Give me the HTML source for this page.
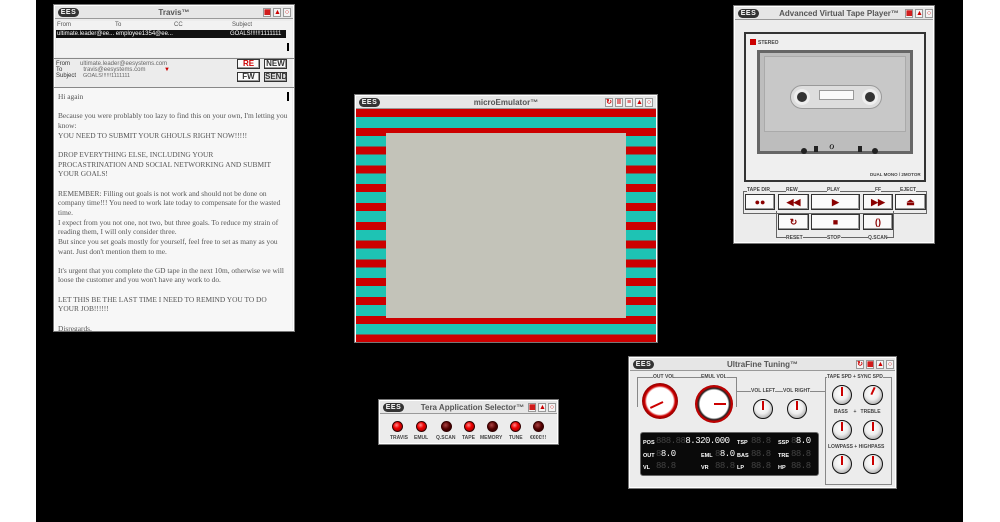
<!DOCTYPE html>
<html><head><meta charset="utf-8"><style>
*{margin:0;padding:0;box-sizing:border-box}
body{width:1000px;height:522px;background:#fff;position:relative;overflow:hidden;font-family:"Liberation Sans",sans-serif}
.bk{position:absolute;left:36px;top:0;width:927px;height:522px;background:#000}
.a{position:absolute}
.win{position:absolute;background:#ececec;border:1px solid #777;box-shadow:inset 0 0 0 1px #fff}
.tb{position:absolute;left:1px;right:1px;top:1px;height:13px;background:#e6e6e6;border-bottom:1px solid #999}
.logo{position:absolute;left:3px;top:2px;width:21px;height:9px;border-radius:5px;background:#333;color:#fff;font:bold 7px/9px "Liberation Sans",sans-serif;text-align:center;letter-spacing:.5px}
.tt{position:absolute;left:0;right:0;top:1px;text-align:center;font:bold 8px/11px "Liberation Sans",sans-serif;color:#555}
.cb{position:absolute;top:2px;width:8px;height:9px;border:1px solid #999;background:#f4f4f4;color:#c00;font:bold 7px/7px sans-serif;text-align:center}
.sm{font-size:5px;font-weight:bold;color:#444;position:absolute;white-space:nowrap}
.btn{position:absolute;background:#fafafa;border:1px solid #333;box-shadow:inset -1px -1px 0 #999;color:#8a0000;text-align:center;font:bold 9px/14px sans-serif}
.knob{position:absolute;border-radius:50%;background:radial-gradient(circle at 45% 40%,#fff 0,#eee 45%,#aaa 80%,#333 100%);border:1.5px solid #111}
.knob i{position:absolute;left:50%;top:8%;width:2px;height:45%;margin-left:-1px;background:#c00}
.led{position:absolute;width:11px;height:11px;border-radius:50%;border:1px solid #300}
.on{background:radial-gradient(circle at 40% 35%,#f88 0,#e00 40%,#800 100%)}
.off{background:radial-gradient(circle at 40% 35%,#a44 0,#500 50%,#200 100%)}
.mail{font:7.4px/9.65px "Liberation Serif",serif;color:#555;white-space:nowrap}
.seg{position:absolute;font:9px/10px "Liberation Mono",monospace;color:#444;letter-spacing:-.5px}
.segw{color:#fff}
.dl{position:absolute;font:bold 5.5px sans-serif;color:#fff}
</style></head><body>
<div class="bk"></div>

<!-- Travis -->
<div class="win" style="left:53px;top:4px;width:242px;height:328px">
 <div class="tb"><div class="logo">EES</div><div class="tt">Travis™</div>
  <div class="cb" style="left:208px">▦</div><div class="cb" style="left:218px">▲</div><div class="cb" style="left:228px">○</div></div>
 <div class="a" style="left:2px;top:16px;width:236px;height:36px;background:#f2f2f2"></div>
 <div class="a" style="left:3px;top:17px;font-size:6px;color:#555">From</div>
 <div class="a" style="left:61px;top:17px;font-size:6px;color:#555">To</div>
 <div class="a" style="left:120px;top:17px;font-size:6px;color:#555">CC</div>
 <div class="a" style="left:178px;top:17px;font-size:6px;color:#555">Subject</div>
 <div class="a" style="left:2px;top:25px;width:230px;height:8px;background:#111;color:#fff;font-size:6px;line-height:8px;padding-left:1px;white-space:nowrap">ultimate.leader@ee... employee1354@ee...<span style="position:absolute;left:174px">GOALS!!!!!!1111111</span></div>
 <div class="a" style="left:233px;top:38px;width:2px;height:8px;background:#000"></div>
 <div class="a" style="left:0;top:53px;width:240px;height:1px;background:#888"></div>
 <div class="a" style="left:2px;top:56px;font-size:6px;line-height:6px;color:#333">From<br>To<br>Subject</div>
 <div class="a" style="left:26px;top:56px;font-size:6px;line-height:6px;color:#666">ultimate.leader@eesystems.com<br>&nbsp;&nbsp;travis@eesystems.com<br></div>
 <div class="a" style="left:29px;top:68px;font-size:5.5px;color:#666">GOALS!!!!!!1111111</div>
 <div class="a" style="left:110px;top:62px;color:#c00;font-size:6px">▼</div>
 <div class="btn" style="left:183px;top:54px;width:23px;height:10px;font-size:8px;line-height:8px;color:#c00">RE</div>
 <div class="btn" style="left:210px;top:54px;width:23px;height:10px;font-size:8px;line-height:8px;color:#333">NEW</div>
 <div class="btn" style="left:183px;top:67px;width:23px;height:10px;font-size:8px;line-height:8px;color:#333">FW</div>
 <div class="btn" style="left:210px;top:67px;width:23px;height:10px;font-size:8px;line-height:8px;color:#333;background:#ddd">SEND</div>
 <div class="a" style="left:0;top:82px;width:240px;height:1px;background:#888"></div>
 <div class="a" style="left:1px;top:83px;width:237px;height:243px;background:#f7f7f7;overflow:hidden">
  <div class="a" style="left:232px;top:4px;width:2px;height:9px;background:#000"></div>
  <div class="a mail" style="left:3px;top:4px">Hi again<br><br>Because you were problably too lazy to find this on your own, I'm letting you<br>know:<br>YOU NEED TO SUBMIT YOUR GHOULS RIGHT NOW!!!!!<br><br>DROP EVERYTHING ELSE, INCLUDING YOUR<br>PROCASTRINATION AND SOCIAL NETWORKING AND SUBMIT<br>YOUR GOALS!<br><br>REMEMBER: Filling out goals is not work and should not be done on<br>company time!!! You need to work late today to compensate for the wasted<br>time.<br>I expect from you not one, not two, but three goals. To reduce my strain of<br>reading them, I will only consider three.<br>But since you set goals mostly for yourself, feel free to set as many as you<br>want. Just don't mention them to me.<br><br>It's urgent that you complete the GD tape in the next 10m, otherwise we will<br>loose the customer and you won't have any work to do.<br><br>LET THIS BE THE LAST TIME I NEED TO REMIND YOU TO DO<br>YOUR JOB!!!!!!<br><br>Disregards,</div>
 </div>
</div>

<!-- microEmulator -->
<div class="win" style="left:354px;top:94px;width:304px;height:249px">
 <div class="tb"><div class="logo">EES</div><div class="tt">microEmulator™</div>
  <div class="cb" style="left:249px">↻</div><div class="cb" style="left:259px">II</div><div class="cb" style="left:269px">≡</div><div class="cb" style="left:279px">▲</div><div class="cb" style="left:289px">○</div></div>
 <div class="a" style="left:1px;top:14px;width:300px;height:233px;background:repeating-linear-gradient(180deg,#c00 0,#c00 8px,#1ec3b4 8px,#1ec3b4 18.8px)"></div>
 <div class="a" style="left:31px;top:38px;width:240px;height:185px;background:#c3c3b9"></div>
</div>

<!-- Tape player -->
<div class="win" style="left:733px;top:5px;width:202px;height:239px">
 <div class="tb"><div class="logo">EES</div><div class="tt" style="padding-left:10px">Advanced Virtual Tape Player™</div>
  <div class="cb" style="left:170px">▦</div><div class="cb" style="left:180px">▲</div><div class="cb" style="left:190px">○</div></div>
 <div class="a" style="left:10px;top:26px;width:182px;height:150px;border:2px solid #333;background:#efefef"></div>
 <div class="a" style="left:16px;top:33px;width:6px;height:6px;background:#c00"></div>
 <div class="sm" style="left:24px;top:34px">STEREO</div>
 <div class="a" style="left:23px;top:44px;width:156px;height:104px;background:#bdbdbd;border:3px solid #666"></div>
 <div class="a" style="left:30px;top:50px;width:142px;height:76px;background:#c8c8c8;border:1px solid #aaa"></div>
 <div class="a" style="left:56px;top:79px;width:92px;height:24px;background:#ddd;border:1px solid #999;border-radius:12px"></div>
 <div class="a" style="left:60px;top:83px;width:16px;height:16px;border-radius:50%;background:#333;border:3px solid #eee"></div>
 <div class="a" style="left:128px;top:83px;width:16px;height:16px;border-radius:50%;background:#333;border:3px solid #eee"></div>
 <div class="a" style="left:85px;top:84px;width:35px;height:10px;background:#fafafa;border:1px solid #999"></div>
 <div class="a" style="left:67px;top:142px;width:6px;height:6px;border-radius:50%;background:#222"></div>
 <div class="a" style="left:80px;top:140px;width:4px;height:6px;background:#222"></div>
 <div class="a" style="left:124px;top:140px;width:4px;height:6px;background:#222"></div>
 <div class="a" style="left:138px;top:142px;width:6px;height:6px;border-radius:50%;background:#222"></div>
 <div class="a" style="left:95px;top:132px;font:12px sans-serif;color:#111">ℴ</div>
 <div class="sm" style="left:136px;top:166px;font-size:4.5px">DUAL MONO / 2MOTOR</div>
 <div class="a" style="left:9px;top:185px;width:184px;height:23px;border:1px solid #666"></div>
 <div class="a" style="left:42px;top:205px;width:118px;height:27px;border:1px solid #666;border-top:none"></div>
 <div class="sm" style="left:13px;top:181px;background:#ececec">TAPE DIR</div>
 <div class="sm" style="left:52px;top:181px;background:#ececec">REW</div>
 <div class="sm" style="left:93px;top:181px;background:#ececec">PLAY</div>
 <div class="sm" style="left:141px;top:181px;background:#ececec">FF</div>
 <div class="sm" style="left:166px;top:181px;background:#ececec">EJECT</div>
 <div class="btn" style="left:11px;top:188px;width:30px;height:16px">●●</div>
 <div class="btn" style="left:44px;top:188px;width:31px;height:16px">◀◀</div>
 <div class="btn" style="left:77px;top:188px;width:49px;height:16px">▶</div>
 <div class="btn" style="left:129px;top:188px;width:30px;height:16px">▶▶</div>
 <div class="btn" style="left:161px;top:188px;width:31px;height:16px">⏏</div>
 <div class="btn" style="left:44px;top:208px;width:31px;height:16px">↻</div>
 <div class="btn" style="left:77px;top:208px;width:49px;height:16px">■</div>
 <div class="btn" style="left:129px;top:208px;width:30px;height:16px">()</div>
 <div class="sm" style="left:52px;top:229px;background:#ececec">RESET</div>
 <div class="sm" style="left:93px;top:229px;background:#ececec">STOP</div>
 <div class="sm" style="left:134px;top:229px;background:#ececec">Q.SCAN</div>
</div>

<!-- Tera -->
<div class="win" style="left:378px;top:399px;width:181px;height:46px">
 <div class="tb"><div class="logo">EES</div><div class="tt" style="padding-left:8px">Tera Application Selector™</div>
  <div class="cb" style="left:148px">▦</div><div class="cb" style="left:158px">▲</div><div class="cb" style="left:168px">○</div></div>
 <div class="led on" style="left:13px;top:21px"></div>
 <div class="led on" style="left:37px;top:21px"></div>
 <div class="led off" style="left:62px;top:21px"></div>
 <div class="led on" style="left:85px;top:21px"></div>
 <div class="led off" style="left:108px;top:21px"></div>
 <div class="led on" style="left:131px;top:21px"></div>
 <div class="led off" style="left:154px;top:21px"></div>
 <div class="sm" style="left:11px;top:35px">TRAVIS</div>
 <div class="sm" style="left:35px;top:35px">EMUL</div>
 <div class="sm" style="left:57px;top:35px">Q.SCAN</div>
 <div class="sm" style="left:83px;top:35px">TAPE</div>
 <div class="sm" style="left:101px;top:35px">MEMORY</div>
 <div class="sm" style="left:130px;top:35px">TUNE</div>
 <div class="sm" style="left:151px;top:35px">€€€€!!!</div>
</div>

<!-- UltraFine -->
<div class="win" style="left:628px;top:356px;width:269px;height:133px">
 <div class="tb"><div class="logo">EES</div><div class="tt">UltraFine Tuning™</div>
  <div class="cb" style="left:226px">↻</div><div class="cb" style="left:236px">▦</div><div class="cb" style="left:246px">▲</div><div class="cb" style="left:256px">○</div></div>
 <div class="a" style="left:8px;top:20px;width:100px;height:30px;border:1px solid #888;border-bottom:none"></div>
 <div class="a" style="left:108px;top:34px;width:88px;height:1px;background:#888"></div>
 <div class="a" style="left:196px;top:20px;width:67px;height:108px;border:1px solid #888;border-right-color:#888"></div>
 <div class="sm" style="left:24px;top:17px;background:#ececec">OUT VOL</div>
 <div class="sm" style="left:72px;top:17px;background:#ececec">EMUL VOL</div>
 <div class="sm" style="left:122px;top:31px;background:#ececec">VOL LEFT</div>
 <div class="sm" style="left:154px;top:31px;background:#ececec">VOL RIGHT</div>
 <div class="sm" style="left:198px;top:17px;background:#ececec">TAPE SPD + SYNC SPD</div>
 <div class="sm" style="left:205px;top:52px;background:#ececec">BASS &nbsp;&nbsp;&nbsp;+&nbsp;&nbsp; TREBLE</div>
 <div class="sm" style="left:199px;top:87px;background:#ececec">LOWPASS + HIGHPASS</div>
 <div class="a" style="left:13px;top:26px;width:36px;height:36px;border-radius:50%;background:radial-gradient(circle,#fff 0,#fff 52%,#c00 60%,#700 75%,#f66 85%,#b00 100%)"></div>
 <div class="a" style="left:20px;top:44px;width:14px;height:2px;background:#c00;transform:rotate(-25deg);transform-origin:right center"></div>
 <div class="a" style="left:66px;top:28px;width:38px;height:38px;border-radius:50%;background:radial-gradient(circle,#fff 0,#fff 52%,#222 58%,#c00 65%,#700 78%,#f66 88%,#b00 100%)"></div>
 <div class="a" style="left:85px;top:46px;width:12px;height:2px;background:#c00"></div>
 <div class="knob" style="left:124px;top:42px;width:20px;height:20px"><i></i></div>
 <div class="knob" style="left:158px;top:42px;width:20px;height:20px"><i></i></div>
 <div class="knob" style="left:203px;top:28px;width:20px;height:20px"><i></i></div>
 <div class="knob" style="left:234px;top:28px;width:20px;height:20px"><i style="transform:rotate(25deg)"></i></div>
 <div class="knob" style="left:203px;top:63px;width:20px;height:20px"><i></i></div>
 <div class="knob" style="left:234px;top:63px;width:20px;height:20px"><i></i></div>
 <div class="knob" style="left:203px;top:97px;width:20px;height:20px"><i></i></div>
 <div class="knob" style="left:234px;top:97px;width:20px;height:20px"><i></i></div>
 <div class="a" style="left:11px;top:75px;width:179px;height:44px;background:#0a0a0a;border:1px solid #666;border-radius:3px"></div>
 <div class="dl" style="left:14px;top:83px">POS</div><div class="seg" style="left:27px;top:79px">888.88<span class="segw">8.320.000</span></div>
 <div class="dl" style="left:108px;top:83px">TSP</div><div class="seg" style="left:122px;top:79px">88.8</div>
 <div class="dl" style="left:149px;top:83px">SSP</div><div class="seg" style="left:162px;top:79px">8<span class="segw">8.0</span></div>
 <div class="dl" style="left:14px;top:96px">OUT</div><div class="seg" style="left:27px;top:92px">8<span class="segw">8.0</span></div>
 <div class="dl" style="left:72px;top:96px">EML</div><div class="seg" style="left:86px;top:92px">8<span class="segw">8.0</span></div>
 <div class="dl" style="left:108px;top:96px">BAS</div><div class="seg" style="left:122px;top:92px">88.8</div>
 <div class="dl" style="left:149px;top:96px">TRE</div><div class="seg" style="left:162px;top:92px">88.8</div>
 <div class="dl" style="left:14px;top:108px">VL</div><div class="seg" style="left:27px;top:104px">88.8</div>
 <div class="dl" style="left:72px;top:108px">VR</div><div class="seg" style="left:86px;top:104px">88.8</div>
 <div class="dl" style="left:108px;top:108px">LP</div><div class="seg" style="left:122px;top:104px">88.8</div>
 <div class="dl" style="left:149px;top:108px">HP</div><div class="seg" style="left:162px;top:104px">88.8</div>
</div>
</body></html>
